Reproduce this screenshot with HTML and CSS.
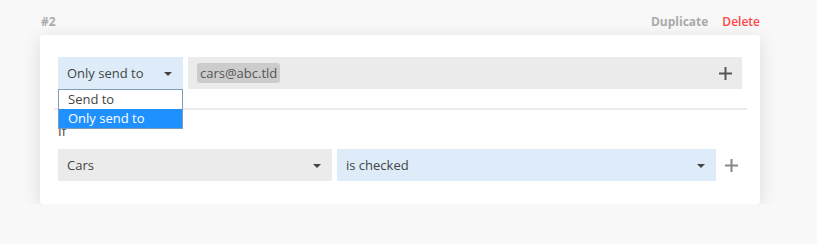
FILE: index.html
```html
<!DOCTYPE html>
<html lang="en">
<head>
    <meta charset="UTF-8">
    <title>Notification rule #2</title>
    <link rel="stylesheet" href="styles.css">
</head>
<body>
    <div class="rule">
        <div class="rule-head">
            <span class="rule-num">#2</span>
            <div class="rule-actions">
                <a class="act act-dup">Duplicate</a>
                <a class="act act-del">Delete</a>
            </div>
        </div>

        <div class="card">
            <!-- Destinatarios -->
            <div class="row">
                <div class="field select blue mode">
                    <span>Only send to</span>
                    <i class="caret"></i>
                    <ul class="dropdown">
                        <li>Send to</li>
                        <li class="active">Only send to</li>
                    </ul>
                </div>
                <div class="field emails">
                    <span class="tag">cars@abc.tld</span>
                    <svg class="plus" width="13" height="13" viewBox="0 0 13 13"><path d="M6.5 0v13M0 6.5h13" stroke="#555" stroke-width="2"/></svg>
                </div>
            </div>

            <hr class="divider">

            <!-- Condiciones -->
            <div class="label">If</div>
            <div class="row">
                <div class="field select grey field-name">
                    <span>Cars</span>
                    <i class="caret"></i>
                </div>
                <div class="field select blue field-op">
                    <span>is checked</span>
                    <i class="caret"></i>
                </div>
                <div class="add-cond">
                    <svg width="13" height="13" viewBox="0 0 13 13"><path d="M6.5 0v13M0 6.5h13" stroke="#888" stroke-width="2"/></svg>
                </div>
            </div>
        </div>
    </div>
</body>
</html>
```

FILE: styles.css
```css
* {
    margin: 0;
    padding: 0;
    box-sizing: border-box;
}

body {
    background: #f8f8f8;
    font-family: "Open Sans", "Liberation Sans", sans-serif;
    font-size: 13px;
    color: #444;
}

.rule {
    width: 720px;
    margin-left: 40px;
}

.rule-head {
    height: 35px;
    display: flex;
    justify-content: space-between;
    align-items: flex-end;
    padding-bottom: 5px;
    font-size: 12px;
    font-weight: 700;
    line-height: 16px;
}

.rule-num {
    color: #aaa;
    padding-left: 1px;
}

.rule-actions {
    display: flex;
    gap: 14px;
}

.act-dup {
    color: #aaa;
}

.act-del {
    color: #ff4646;
    font-weight: 600;
}

.card {
    background: #fff;
    border-radius: 3px;
    box-shadow: 0 4px 18px rgba(0, 0, 0, 0.12);
    padding: 22px 18px 23px;
}

.row {
    display: flex;
    gap: 5px;
    height: 32px;
}

.field {
    height: 32px;
    display: flex;
    align-items: center;
    padding: 0 9px;
    position: relative;
    line-height: 18px;
}

.blue {
    background: #ddecf8;
}

.grey {
    background: #ebebeb;
}

.select {
    justify-content: space-between;
    padding-right: 11px;
}

.caret {
    width: 0;
    height: 0;
    border-left: 4px solid transparent;
    border-right: 4px solid transparent;
    border-top: 4px solid #444;
    margin-top: 1px;
}

.mode {
    width: 125px;
}

.emails {
    flex: 1;
    background: #ebebeb;
    justify-content: space-between;
    padding-right: 10px;
}

.tag {
    background: #ccc;
    border-radius: 3px;
    height: 20px;
    line-height: 20px;
    padding: 0 3px;
    color: #555;
}

.dropdown {
    list-style: none;
    position: absolute;
    top: 32px;
    left: 0;
    width: 125px;
    background: #fff;
    border: 1px solid #7f9db9;
    z-index: 2;
}

.dropdown li {
    height: 19px;
    line-height: 19px;
    padding-left: 9px;
    color: #444;
}

.dropdown li.active {
    background: #1e90ff;
    color: #fff;
}

.divider {
    border: none;
    height: 2px;
    background: #ebebeb;
    margin: 19px -5px 0 -4px;
}

.label {
    padding: 12px 0 9px;
    line-height: 18px;
}

.field-name {
    width: 274px;
}

.field-op {
    flex: 1;
}

.add-cond {
    width: 21px;
    display: flex;
    align-items: center;
    justify-content: center;
}
```
